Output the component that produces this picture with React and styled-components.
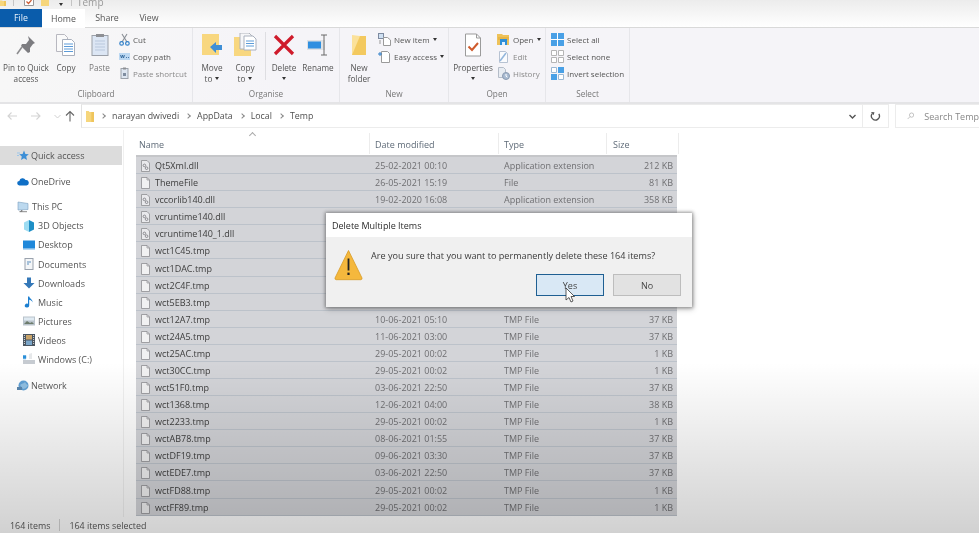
import React from 'react';
import styled, { createGlobalStyle } from 'styled-components';

const GlobalStyle = createGlobalStyle`
  html, body { margin: 0; padding: 0; background: #fff; overflow: hidden; }
  body { font-family: "Open Sans", "Noto Sans", "Liberation Sans", sans-serif; }
`;

const Window = styled.div`
  position: relative;
  width: 979px;
  height: 533px;
  overflow: hidden;
  display: flex;
  flex-direction: column;
  background: #fff;
  color: #444;
  filter: blur(0.35px);
`;

/* the capture gets darker towards the bottom */
const Vignette = styled.div`
  position: absolute;
  inset: 0;
  pointer-events: none;
  background: linear-gradient(rgba(0, 0, 0, 0) 68%, rgba(0, 0, 0, 0.18) 100%);
`;

const TopArea = styled.div`
  background: linear-gradient(#ececec, #ffffff);
  border-bottom: 1px solid #d9d9d9;
`;

const TitleBar = styled.div`
  height: 9px;
  overflow: hidden;
  display: flex;
  align-items: flex-start;
`;

const TitleIcons = styled.div`
  display: flex;
  align-items: flex-end;
  height: 6px;
`;

const TitleSep = styled.span`
  width: 1px;
  height: 6px;
  background: #c4c4c4;
  margin: ${p => p.$margin};
`;

const TitleText = styled.span`
  font-size: 10px;
  line-height: 12px;
  color: #999;
  margin-left: 5px;
  transform: translateY(-4px);
`;

const TabRow = styled.div`
  height: 18px;
  display: flex;
`;

const Tab = styled.div`
  width: ${p => p.$width}px;
  display: flex;
  align-items: center;
  justify-content: center;
  font-size: 8.8px;
  color: ${p => (p.$file ? '#e8f1fa' : '#555')};
  background: ${p => (p.$file ? '#0a5cab' : p.$active ? '#ffffff' : 'transparent')};
  margin-bottom: ${p => (p.$active ? '-1px' : '0')};
`;

const Ribbon = styled.div`
  height: 74px;
  flex: none;
  display: flex;
  background: linear-gradient(90deg, #f7f7f7, #f5f4f8 30%);
  border-bottom: 2px solid #e4e4e6;
`;

const Group = styled.div`
  width: ${p => p.$width}px;
  flex: none;
  display: flex;
  flex-direction: column;
  border-right: 1px solid #e6e6ea;
  box-sizing: border-box;
`;

const GroupBody = styled.div`
  flex: 1;
  display: flex;
  padding-left: ${p => p.$pad || 0}px;
`;

const GroupLabel = styled.div`
  height: 16px;
  text-align: center;
  font-size: 8.2px;
  line-height: 15px;
  color: #777;
`;

const LargeButton = styled.div`
  width: ${p => p.$width}px;
  flex: none;
  display: flex;
  flex-direction: column;
  align-items: center;
  padding-top: 5px;
  font-size: 8.2px;
  line-height: 11px;
  text-align: center;
  color: ${p => (p.$dim ? '#777' : '#555')};
  svg { display: block; margin-bottom: 5px; }
`;

const Caret = styled.i`
  display: ${p => (p.$block ? 'block' : 'inline-block')};
  width: 0;
  height: 0;
  border: 2.5px solid transparent;
  border-top: 3px solid #333;
  border-bottom: 0;
  margin: ${p => (p.$block ? '4px auto 0' : '0 0 2px 3px')};
`;

const VSep = styled.div`
  width: 1px;
  height: 48px;
  margin: 4px 0 0 6px;
  background: #dedee2;
  flex: none;
`;

const SmallColumn = styled.div`
  display: flex;
  flex-direction: column;
  padding-top: 3px;
`;

const SmallButton = styled.div`
  height: 17px;
  display: flex;
  align-items: center;
  gap: 3px;
  font-size: 8px;
  white-space: nowrap;
  color: ${p => (p.$dim ? '#8a8a8a' : '#555')};
  svg { flex: none; }
`;

const AddressRow = styled.div`
  height: 26px;
  flex: none;
  display: flex;
  align-items: flex-start;
  background: #fff;
`;

const NavBar = styled.div`
  width: 81px;
  height: 24px;
  box-sizing: border-box;
  flex: none;
  display: flex;
  align-items: center;
  padding-left: 6px;
  gap: 12px;
  svg { flex: none; }
`;

const UpSlot = styled.span`
  display: flex;
  margin-left: -8px;
`;

const AddressBox = styled.div`
  width: 782px;
  height: 24px;
  box-sizing: border-box;
  flex: none;
  display: flex;
  align-items: center;
  padding-left: 4px;
  border: 1px solid #ececec;
  border-left: 1px solid #e2e2e2;
  font-size: 8.8px;
  color: #4f4f4f;
`;

const Crumb = styled.span`
  margin-left: ${p => p.$gap}px;
  white-space: nowrap;
`;

const Chevron = styled.span`
  width: 3px;
  height: 3px;
  margin-left: 7px;
  border-top: 1px solid #888;
  border-right: 1px solid #888;
  transform: rotate(45deg);
  flex: none;
`;

const AddressEnd = styled.div`
  margin-left: auto;
  display: flex;
  align-items: center;
  padding-right: 6px;
`;

const RefreshBox = styled.div`
  width: 26px;
  height: 24px;
  box-sizing: border-box;
  flex: none;
  display: flex;
  align-items: center;
  justify-content: center;
  border: 1px solid #ececec;
  border-left: 0;
`;

const SearchBox = styled.div`
  margin-left: 6px;
  flex: 1;
  height: 24px;
  box-sizing: border-box;
  display: flex;
  align-items: center;
  gap: 10px;
  padding-left: 11px;
  border: 1px solid #ececec;
  border-right: 0;
  font-size: 9px;
  color: #888;
  white-space: nowrap;
  overflow: hidden;
`;

const Main = styled.div`
  flex: 1;
  min-height: 0;
  display: flex;
`;

const Sidebar = styled.nav`
  width: 124px;
  box-sizing: border-box;
  flex: none;
  padding-top: 16px;
  border-right: 1px solid #f0f0f0;
`;

const NavItem = styled.div`
  width: 122px;
  height: 19.1px;
  display: flex;
  align-items: center;
  gap: ${p => (p.$child ? 3 : 2)}px;
  padding-left: ${p => (p.$child ? 23 : 17)}px;
  box-sizing: border-box;
  margin-top: ${p => p.$gap || 0}px;
  font-size: 9px;
  color: #555;
  background: ${p => (p.$active ? '#dcdcdc' : 'transparent')};
  svg { flex: none; }
`;

const FileArea = styled.div`
  flex: 1;
  min-width: 0;
  padding-left: 12px;
`;

const HeaderRow = styled.div`
  height: 25px;
  width: 543px;
  display: grid;
  grid-template-columns: 234px 129px 108px 72px;
  position: relative;
`;

const HeaderCell = styled.div`
  display: flex;
  align-items: center;
  height: 21px;
  margin-top: 3px;
  padding: 2px 0 0 ${p => p.$pad}px;
  box-sizing: border-box;
  font-size: 9px;
  color: #5f6b78;
  border-right: 1px solid #ececec;
`;

const SortMark = styled.span`
  position: absolute;
  left: 114px;
  top: 3px;
  width: 4px;
  height: 4px;
  border-top: 1px solid #aaa;
  border-left: 1px solid #aaa;
  transform: rotate(45deg);
`;

const FileList = styled.div`
  width: 541px;
  border-top: 2px solid #c5c6c9;
`;

const FileRow = styled.div`
  height: 17.08px;
  box-sizing: border-box;
  padding-top: 2px;
  display: grid;
  grid-template-columns: 234px 129px 108px 70px;
  align-items: center;
  background: #d3d4d8;
  border-bottom: 1px solid #bcc2ca;
  font-size: 9px;
  line-height: 12px;
  white-space: nowrap;
`;

const NameCell = styled.div`
  display: flex;
  align-items: center;
  gap: 5px;
  padding-left: 5px;
  color: #3d3d3d;
`;

const MetaCell = styled.div`
  padding-left: 5px;
  color: #6f6f72;
  text-align: ${p => (p.$right ? 'right' : 'left')};
  padding-right: ${p => (p.$right ? '4px' : '0')};
`;

const StatusBar = styled.div`
  height: 16px;
  flex: none;
  display: flex;
  align-items: center;
  font-size: 8.9px;
  color: #555;
`;

const StatusText = styled.span`
  margin-left: ${p => p.$gap}px;
`;

const StatusSep = styled.span`
  width: 1px;
  height: 12px;
  margin-left: 9px;
  background: #d4d4d4;
`;

const Dialog = styled.div`
  position: absolute;
  left: 326px;
  top: 213px;
  width: 366px;
  height: 94px;
  background: #f0f0f0;
  box-shadow: 0 0 3px 1px rgba(60, 60, 60, 0.45), 1px 2px 6px rgba(0, 0, 0, 0.25);
  display: flex;
  flex-direction: column;
`;

const DialogTitle = styled.div`
  height: 24px;
  flex: none;
  background: #fff;
  display: flex;
  align-items: center;
  padding-left: 6px;
  font-size: 9px;
  color: #2c2c2c;
`;

const DialogBody = styled.div`
  flex: 1;
  display: flex;
  padding: 12px 0 0 8px;
  position: relative;
`;

const DialogMessage = styled.div`
  flex: 1;
  padding: 1px 0 0 8px;
  font-size: 9.1px;
  line-height: 12px;
  color: #3a3a3a;
  white-space: nowrap;
`;

const DialogButtons = styled.div`
  position: absolute;
  top: 37px;
  left: 210px;
  display: flex;
  gap: 9px;
`;

const DialogButton = styled.div`
  width: 68px;
  height: 22px;
  box-sizing: border-box;
  display: flex;
  align-items: center;
  justify-content: center;
  font-size: 9px;
  color: #444;
  background: ${p => (p.$primary ? '#d9e8f5' : '#e2e2e2')};
  border: ${p => (p.$primary ? '1.5px solid #1f5f92' : '1px solid #bdbdbd')};
`;

const Cursor = styled.svg`
  position: absolute;
  left: 239px;
  top: 50px;
`;

const FolderSmall = ({ w = 8, h = 12 }) => (
  <svg width={w} height={h} viewBox="0 0 9 12" preserveAspectRatio="none">
    <path d="M0 1h3l1 1h5v10H0z" fill="#f6d67c" />
    <path d="M6 2h3v10H6z" fill="#efc55c" />
  </svg>
);

const PinIcon = () => (
  <svg width="24" height="24" viewBox="0 0 24 24">
    <path d="M14 3l7 7-2 1-3 4 0 4-2 1-7-7 1-2 4 0 3-4z" fill="#7c7c80" />
    <path d="M8 14L3 21" stroke="#8d8d8f" strokeWidth="1.6" />
  </svg>
);

const CopyIcon = () => (
  <svg width="24" height="24" viewBox="0 0 24 24">
    <path d="M2.5 1.5h8l3 3v14h-11z" fill="#fafafa" stroke="#b8b8c0" />
    <path d="M8.5 6.5h9l3 3v13h-12z" fill="#fff" stroke="#a9b0bd" />
    <path d="M10 11h9M10 13.5h9M10 16h9M10 18.5h9" stroke="#5c9bd8" />
  </svg>
);

const PasteIcon = () => (
  <svg width="24" height="24" viewBox="0 0 24 24">
    <rect x="4" y="2.5" width="16" height="20" fill="#dce6f4" stroke="#9a9fa8" />
    <rect x="8" y="1" width="8" height="3" fill="#8d8f94" />
    <path d="M7 8h10M7 11h10M7 14h10M7 17h10" stroke="#b9c8dd" />
  </svg>
);

const MoveIcon = () => (
  <svg width="24" height="24" viewBox="0 0 24 24">
    <path d="M2 1h17v21H2z" fill="#f8d77f" />
    <path d="M10 14l6-5v3h6v5h-6v3z" fill="#3f8fd6" />
  </svg>
);

const CopyToIcon = () => (
  <svg width="24" height="24" viewBox="0 0 24 24">
    <path d="M1 4h17v19H1z" fill="#f8d77f" />
    <path d="M7 0h9l3 3v13H7z" fill="#f6f6f8" stroke="#b0b4bc" />
    <path d="M11 3h9l3 3v11H11z" fill="#fff" stroke="#a9b0bd" />
    <path d="M13 8h8M13 10.5h8M13 13h8" stroke="#5c9bd8" />
  </svg>
);

const DeleteIcon = () => (
  <svg width="24" height="24" viewBox="0 0 24 24">
    <path d="M3 3l18 18M21 3L3 21" stroke="#cf1b2b" strokeWidth="3.2" />
  </svg>
);

const RenameIcon = () => (
  <svg width="24" height="24" viewBox="0 0 24 24">
    <rect x="1" y="7" width="18" height="10" fill="#dfe1e4" />
    <rect x="2" y="8.5" width="13" height="7" fill="#2f8fe0" />
    <path d="M18 2v20M15 2h6M15 22h6" stroke="#6b6b6b" />
  </svg>
);

const NewFolderIcon = () => (
  <svg width="20" height="24" viewBox="0 0 20 24">
    <path d="M3 2l8 1 0 0v19H3z" fill="#fbe19a" />
    <path d="M11 3h6v19H3z" fill="#f3c95f" />
  </svg>
);

const PropertiesIcon = () => (
  <svg width="24" height="24" viewBox="0 0 24 24">
    <path d="M4.5 1h11l4 4v18h-15z" fill="#fff" stroke="#9b9b9b" />
    <path d="M15.5 1v4h4" fill="none" stroke="#9b9b9b" />
    <path d="M7.5 13.5l3.5 3.5 6-7" fill="none" stroke="#cf5a2c" strokeWidth="2" />
  </svg>
);

const CutIcon = () => (
  <svg width="11" height="13" viewBox="0 0 11 13">
    <path d="M3 1l5 8M8 1L3 9" stroke="#8a8f96" strokeWidth="1.1" />
    <circle cx="2.6" cy="10.4" r="1.8" fill="none" stroke="#2f7fc8" strokeWidth="1.2" />
    <circle cx="8.4" cy="10.4" r="1.8" fill="none" stroke="#2f7fc8" strokeWidth="1.2" />
  </svg>
);

const CopyPathIcon = () => (
  <svg width="11" height="13" viewBox="0 0 11 13">
    <rect x="0" y="3" width="11" height="7" fill="#bcd8f2" />
    <path d="M1.5 5l1 3 1-3 1 3 1-3M7 7.5h1M9 7.5h1" stroke="#2a5f96" strokeWidth="0.8" fill="none" />
  </svg>
);

const PasteShortcutIcon = () => (
  <svg width="11" height="13" viewBox="0 0 11 13">
    <rect x="2" y="1.5" width="7" height="10" fill="#dde5f0" stroke="#9ba1aa" />
    <rect x="4" y="0.5" width="3" height="2" fill="#8d8f94" />
    <rect x="4" y="6" width="3" height="3" fill="#7f8da0" />
  </svg>
);

const NewItemIcon = () => (
  <svg width="13" height="13" viewBox="0 0 13 13">
    <rect x="0.5" y="0.5" width="5" height="5" fill="#cfe0f2" stroke="#7d8aa0" />
    <path d="M5.5 4.5h4l3 2.5v5.5h-7z" fill="#fff" stroke="#9a9a9a" />
    <path d="M2 7v4" stroke="#999" />
  </svg>
);

const EasyAccessIcon = () => (
  <svg width="13" height="13" viewBox="0 0 13 13">
    <path d="M3.5 1.5h6l2 2v9h-8z" fill="#fff" stroke="#9a9a9a" />
    <path d="M0 4h4M2 2v4" stroke="#2f7fc8" />
  </svg>
);

const OpenIcon = () => (
  <svg width="13" height="13" viewBox="0 0 13 13">
    <path d="M0 1h5l1 1h6v10H0z" fill="#eec25a" />
    <rect x="1" y="4" width="11" height="3" fill="#e6b548" />
    <rect x="3" y="6" width="7" height="6" fill="#2f8fd8" />
    <rect x="5" y="9" width="3" height="3" fill="#dff0ff" />
  </svg>
);

const EditIcon = () => (
  <svg width="13" height="13" viewBox="0 0 13 13">
    <path d="M2.5 1.5h6l2 2v9h-8z" fill="#fafbfd" stroke="#b7c2d2" />
    <path d="M3 11l6-8" stroke="#92b6dc" strokeWidth="1.6" />
  </svg>
);

const HistoryIcon = () => (
  <svg width="13" height="13" viewBox="0 0 13 13">
    <path d="M1.5 0.5h5l2 2v8h-7z" fill="#e8ecf2" stroke="#b4bcc8" />
    <circle cx="9" cy="9" r="3.5" fill="#a9bbd2" stroke="#8b9bb1" />
    <path d="M9 7v2.2l1.4 1" stroke="#fff" fill="none" />
  </svg>
);

const SelectAllIcon = () => (
  <svg width="13" height="13" viewBox="0 0 13 13">
    <rect width="13" height="13" fill="#49a0e6" />
    <path d="M6.5 0v13M0 6.5h13" stroke="#fff" />
  </svg>
);

const SelectNoneIcon = () => (
  <svg width="13" height="13" viewBox="0 0 13 13">
    <path d="M0.5 0.5h5v5h-5zM7.5 0.5h5v5h-5zM0.5 7.5h5v5h-5zM7.5 7.5h5v5h-5z" fill="#fff" stroke="#b5b5b5" />
  </svg>
);

const InvertIcon = () => (
  <svg width="13" height="13" viewBox="0 0 13 13">
    <path d="M0.5 0.5h5v5h-5zM7.5 7.5h5v5h-5z" fill="#fff" stroke="#9bb8d4" />
    <rect x="7" y="0" width="6" height="6" fill="#49a0e6" />
    <rect x="0" y="7" width="6" height="6" fill="#49a0e6" />
  </svg>
);

const ArrowLeft = ({ flip }) => (
  <svg width="12" height="10" viewBox="0 0 12 10" style={flip ? { transform: 'scaleX(-1)' } : undefined}>
    <path d="M11 5H2M5.5 1.5L2 5l3.5 3.5" fill="none" stroke="#d4d4d4" strokeWidth="1.1" />
  </svg>
);

const SmallChevron = ({ color = '#d0d0d0', width = 1 }) => (
  <svg width="7" height="5" viewBox="0 0 7 5">
    <path d="M0.5 1L3.5 4l3-3" fill="none" stroke={color} strokeWidth={width} />
  </svg>
);

const UpArrow = () => (
  <svg width="10" height="12" viewBox="0 0 10 12">
    <path d="M5 11.5V1.5M1 5.5l4-4 4 4" fill="none" stroke="#666" strokeWidth="1.1" />
  </svg>
);

const RefreshIcon = () => (
  <svg width="11" height="11" viewBox="0 0 11 11">
    <path d="M2.2 2.6a4 4 0 1 0 6.6 0.3" fill="none" stroke="#555" strokeWidth="1.3" />
    <path d="M1 1l3.5 0.3-1 3z" fill="#555" />
  </svg>
);

const SearchIcon = () => (
  <svg width="12" height="12" viewBox="0 0 12 12">
    <circle cx="7.5" cy="4.5" r="3.5" fill="none" stroke="#a0a0a0" />
    <path d="M5 7l-4 4" stroke="#a0a0a0" />
  </svg>
);

const StarIcon = () => (
  <svg width="12" height="12" viewBox="0 0 12 12">
    <path d="M7 0.5l1.4 3.4 3.4 0.3-2.6 2.3 0.8 3.6-3-1.9-3 1.9 0.8-3.6-2.6-2.3 3.4-0.3z" fill="#3d8fd6" />
    <path d="M0 3h3M0 5.5h2" stroke="#9cc6ea" />
  </svg>
);

const CloudIcon = () => (
  <svg width="12" height="12" viewBox="0 0 14 12">
    <path d="M3 10a2.6 2.6 0 0 1-.3-5.2A4 4 0 0 1 10 3.6a3.2 3.2 0 0 1 1 6.4z" fill="#0f6fc6" />
  </svg>
);

const PcIcon = () => (
  <svg width="13" height="12" viewBox="0 0 13 12">
    <path d="M1 1l10 1.5v6L1 9z" fill="#bcd9ef" stroke="#7aa0bf" strokeWidth="0.6" />
    <path d="M5 9.2v1.5H2.5M5 10.7h5" stroke="#8c8c8c" />
  </svg>
);

const CubeIcon = () => (
  <svg width="12" height="12" viewBox="0 0 12 12">
    <path d="M6 0l5 2.5v7L6 12z" fill="#1e8fc6" />
    <path d="M6 0L1 2.5v7L6 12z" fill="#9ddcf2" />
  </svg>
);

const DesktopIcon = () => (
  <svg width="12" height="12" viewBox="0 0 12 12">
    <rect y="1.5" width="12" height="8" fill="#1f88da" />
    <rect y="9.5" width="12" height="1" fill="#6db2e8" />
  </svg>
);

const DocumentsIcon = () => (
  <svg width="12" height="12" viewBox="0 0 12 12">
    <rect x="2" y="0.5" width="8" height="11" fill="#f4f6f8" stroke="#9aa2ad" />
    <path d="M4 4h4M4 6h2" stroke="#5d8fbe" />
  </svg>
);

const DownloadsIcon = () => (
  <svg width="12" height="12" viewBox="0 0 12 12">
    <path d="M4 0.5h4V6h3.5L6 11.5.5 6H4z" fill="#3478b8" />
  </svg>
);

const MusicIcon = () => (
  <svg width="12" height="12" viewBox="0 0 12 12">
    <path d="M5 0.5h1.2c.3 2 3.8 3 3.3 6-.5-1.7-2-2.5-3.3-2.7V9.5A2.2 2 0 1 1 5 7.8z" fill="#1d7fd0" />
  </svg>
);

const PicturesIcon = () => (
  <svg width="12" height="12" viewBox="0 0 12 12">
    <rect y="1.5" width="12" height="9" fill="#b9c3cb" />
    <rect x="1" y="2.5" width="10" height="3" fill="#dfeaf2" />
    <path d="M1 9l3-3 3 2 2-1 2 2z" fill="#6d7c6c" />
  </svg>
);

const VideosIcon = () => (
  <svg width="12" height="12" viewBox="0 0 12 12">
    <rect width="12" height="12" fill="#4a5560" />
    <rect x="3" y="1" width="6" height="4.5" fill="#c9a46a" />
    <rect x="3" y="6.5" width="6" height="4.5" fill="#7ba6c9" />
    <path d="M1.4 1v10M10.6 1v10" stroke="#dcdcdc" strokeDasharray="1 1" />
  </svg>
);

const DriveIcon = () => (
  <svg width="12" height="12" viewBox="0 0 12 12">
    <rect y="7" width="12" height="4" fill="#c6cbd1" />
    <path d="M0 2.5h3v3H0zM0 6h3" fill="#2b8fd8" stroke="#2b8fd8" strokeWidth="0.4" />
    <path d="M6 1l3-1v6H6z" fill="#e6e8ea" />
  </svg>
);

const NetworkIcon = () => (
  <svg width="12" height="12" viewBox="0 0 12 12">
    <circle cx="6.5" cy="5.5" r="5" fill="#5f9fd3" />
    <path d="M3 5c2-2 4-1 5-3 1 2 2 3 3 3-1 3-4 4-5 4z" fill="#8fbfe2" />
    <rect x="0" y="7" width="5" height="3" fill="#5a86ad" />
  </svg>
);

const BlankFile = () => (
  <svg width="9" height="12" viewBox="0 0 9 12">
    <path d="M0.5 0.5h5.5l2.5 2.5v8.5h-8z" fill="#f1f1f2" stroke="#8e8e92" strokeWidth="0.8" />
    <path d="M6 0.5V3h2.5" fill="none" stroke="#8e8e92" strokeWidth="0.7" />
  </svg>
);

const DllFile = () => (
  <svg width="9" height="12" viewBox="0 0 9 12">
    <path d="M0.5 0.5h5.5l2.5 2.5v8.5h-8z" fill="#e9e9ec" stroke="#8e8e92" strokeWidth="0.8" />
    <circle cx="3.4" cy="5.4" r="1.3" fill="none" stroke="#77777c" strokeWidth="0.8" />
    <circle cx="5.6" cy="8.2" r="1.3" fill="none" stroke="#77777c" strokeWidth="0.8" />
  </svg>
);

const WarningIcon = () => (
  <svg width="29" height="32" viewBox="0 0 29 32">
    <path d="M14.5 1.5L28 29a1.4 1.4 0 0 1-1.2 1.7H2.2A1.4 1.4 0 0 1 1 29z" fill="#f5b83d" stroke="#d89a25" strokeWidth="0.8" />
    <rect x="13.6" y="9.5" width="1.8" height="12" fill="#222" />
    <rect x="13.4" y="23.6" width="2.2" height="2.4" fill="#222" />
  </svg>
);

const clipboardSmall = [
  { label: 'Cut', Icon: CutIcon },
  { label: 'Copy path', Icon: CopyPathIcon },
  { label: 'Paste shortcut', Icon: PasteShortcutIcon, dim: true },
];

const newSmall = [
  { label: 'New item', Icon: NewItemIcon, caret: true },
  { label: 'Easy access', Icon: EasyAccessIcon, caret: true },
];

const openSmall = [
  { label: 'Open', Icon: OpenIcon, caret: true },
  { label: 'Edit', Icon: EditIcon, dim: true },
  { label: 'History', Icon: HistoryIcon, dim: true },
];

const selectSmall = [
  { label: 'Select all', Icon: SelectAllIcon },
  { label: 'Select none', Icon: SelectNoneIcon },
  { label: 'Invert selection', Icon: InvertIcon },
];

const navItems = [
  { label: 'Quick access', Icon: StarIcon, active: true },
  { label: 'OneDrive', Icon: CloudIcon, gap: 7 },
  { label: 'This PC', Icon: PcIcon, gap: 6 },
  { label: '3D Objects', Icon: CubeIcon, child: true },
  { label: 'Desktop', Icon: DesktopIcon, child: true },
  { label: 'Documents', Icon: DocumentsIcon, child: true },
  { label: 'Downloads', Icon: DownloadsIcon, child: true },
  { label: 'Music', Icon: MusicIcon, child: true },
  { label: 'Pictures', Icon: PicturesIcon, child: true },
  { label: 'Videos', Icon: VideosIcon, child: true },
  { label: 'Windows (C:)', Icon: DriveIcon, child: true },
  { label: 'Network', Icon: NetworkIcon, gap: 7 },
];

const ext = 'Application extension';
// rows behind the dialog only show their name
const files = [
  ['Qt5Xml.dll', '25-02-2021 00:10', ext, '212 KB', true],
  ['ThemeFile', '26-05-2021 15:19', 'File', '81 KB'],
  ['vccorlib140.dll', '19-02-2020 16:08', ext, '358 KB', true],
  ['vcruntime140.dll', '', '', '', true],
  ['vcruntime140_1.dll', '', '', '', true],
  ['wct1C45.tmp', '', '', ''],
  ['wct1DAC.tmp', '', '', ''],
  ['wct2C4F.tmp', '', '', ''],
  ['wct5EB3.tmp', '', '', ''],
  ['wct12A7.tmp', '10-06-2021 05:10', 'TMP File', '37 KB'],
  ['wct24A5.tmp', '11-06-2021 03:00', 'TMP File', '37 KB'],
  ['wct25AC.tmp', '29-05-2021 00:02', 'TMP File', '1 KB'],
  ['wct30CC.tmp', '29-05-2021 00:02', 'TMP File', '1 KB'],
  ['wct51F0.tmp', '03-06-2021 22:50', 'TMP File', '37 KB'],
  ['wct1368.tmp', '12-06-2021 04:00', 'TMP File', '38 KB'],
  ['wct2233.tmp', '29-05-2021 00:02', 'TMP File', '1 KB'],
  ['wctAB78.tmp', '08-06-2021 01:55', 'TMP File', '37 KB'],
  ['wctDF19.tmp', '09-06-2021 03:30', 'TMP File', '37 KB'],
  ['wctEDE7.tmp', '03-06-2021 22:50', 'TMP File', '37 KB'],
  ['wctFD88.tmp', '29-05-2021 00:02', 'TMP File', '1 KB'],
  ['wctFF89.tmp', '29-05-2021 00:02', 'TMP File', '1 KB'],
];

const SmallList = ({ items }) => (
  <SmallColumn>
    {items.map(({ label, Icon, dim, caret }) => (
      <SmallButton key={label} $dim={dim}>
        <Icon />
        <span>{label}{caret && <Caret />}</span>
      </SmallButton>
    ))}
  </SmallColumn>
);

const App = () => (
  <Window>
    <GlobalStyle />
    <TopArea>
      <TitleBar>
        <TitleIcons>
          <FolderSmall w={6} h={6} />
          <TitleSep $margin="0 0 0 7px" />
          <svg width="10" height="6" viewBox="0 0 10 6" style={{ marginLeft: 10 }}>
            <path d="M0.5 0v5.5h9V0" fill="#fff" stroke="#999" />
            <path d="M2.5 1.5l2 2 3-3.5" fill="none" stroke="#cc5a33" strokeWidth="1.2" />
          </svg>
          <svg width="8" height="6" viewBox="0 0 8 6" style={{ marginLeft: 7 }}>
            <rect width="8" height="6" fill="#f6d67c" />
          </svg>
          <Caret style={{ margin: '0 0 0 10px' }} />
          <TitleSep $margin="0 0 0 8px" />
        </TitleIcons>
        <TitleText>Temp</TitleText>
      </TitleBar>
      <TabRow>
        <Tab $width={42} $file>File</Tab>
        <Tab $width={43} $active>Home</Tab>
        <Tab $width={44}>Share</Tab>
        <Tab $width={40}>View</Tab>
      </TabRow>
    </TopArea>

    <Ribbon>
      <Group $width={193}>
        <GroupBody>
          <LargeButton $width={52}><PinIcon /><span>Pin to Quick<br />access</span></LargeButton>
          <LargeButton $width={28}><CopyIcon /><span>Copy</span></LargeButton>
          <LargeButton $width={39} $dim><PasteIcon /><span>Paste</span></LargeButton>
          <SmallList items={clipboardSmall} />
        </GroupBody>
        <GroupLabel>Clipboard</GroupLabel>
      </Group>
      <Group $width={147}>
        <GroupBody>
          <LargeButton $width={38}><MoveIcon /><span>Move<br />to<Caret /></span></LargeButton>
          <LargeButton $width={28}><CopyToIcon /><span>Copy<br />to<Caret /></span></LargeButton>
          <VSep />
          <LargeButton $width={36}><DeleteIcon /><span>Delete<Caret $block /></span></LargeButton>
          <LargeButton $width={32}><RenameIcon /><span>Rename</span></LargeButton>
        </GroupBody>
        <GroupLabel>Organise</GroupLabel>
      </Group>
      <Group $width={109}>
        <GroupBody>
          <LargeButton $width={38}><NewFolderIcon /><span>New<br />folder</span></LargeButton>
          <SmallList items={newSmall} />
        </GroupBody>
        <GroupLabel>New</GroupLabel>
      </Group>
      <Group $width={97}>
        <GroupBody>
          <LargeButton $width={48}><PropertiesIcon /><span>Properties<Caret $block /></span></LargeButton>
          <SmallList items={openSmall} />
        </GroupBody>
        <GroupLabel>Open</GroupLabel>
      </Group>
      <Group $width={84}>
        <GroupBody $pad={5}>
          <SmallList items={selectSmall} />
        </GroupBody>
        <GroupLabel>Select</GroupLabel>
      </Group>
    </Ribbon>

    <AddressRow>
      <NavBar>
        <ArrowLeft />
        <ArrowLeft flip />
        <SmallChevron />
        <UpSlot><UpArrow /></UpSlot>
      </NavBar>
      <AddressBox>
        <FolderSmall />
        <Chevron />
        <Crumb $gap={7}>narayan dwivedi</Crumb>
        <Chevron />
        <Crumb $gap={7}>AppData</Crumb>
        <Chevron />
        <Crumb $gap={7}>Local</Crumb>
        <Chevron />
        <Crumb $gap={7}>Temp</Crumb>
        <AddressEnd><SmallChevron color="#555" width={1.4} /></AddressEnd>
      </AddressBox>
      <RefreshBox><RefreshIcon /></RefreshBox>
      <SearchBox><SearchIcon /><span>Search Temp</span></SearchBox>
    </AddressRow>

    <Main>
      <Sidebar>
        {navItems.map(({ label, Icon, active, gap, child }) => (
          <NavItem key={label} $active={active} $gap={gap} $child={child}>
            <Icon />
            <span>{label}</span>
          </NavItem>
        ))}
      </Sidebar>
      <FileArea>
        <HeaderRow>
          <SortMark />
          <HeaderCell $pad={3}>Name</HeaderCell>
          <HeaderCell $pad={5}>Date modified</HeaderCell>
          <HeaderCell $pad={5}>Type</HeaderCell>
          <HeaderCell $pad={6}>Size</HeaderCell>
        </HeaderRow>
        <FileList>
          {files.map(([name, date, type, size, dll]) => (
            <FileRow key={name}>
              <NameCell>{dll ? <DllFile /> : <BlankFile />}<span>{name}</span></NameCell>
              <MetaCell>{date}</MetaCell>
              <MetaCell>{type}</MetaCell>
              <MetaCell $right>{size}</MetaCell>
            </FileRow>
          ))}
        </FileList>
      </FileArea>
    </Main>

    <StatusBar>
      <StatusText $gap={10}>164 items</StatusText>
      <StatusSep />
      <StatusText $gap={9}>164 items selected</StatusText>
    </StatusBar>

    <Vignette />

    <Dialog>
      <DialogTitle>Delete Multiple Items</DialogTitle>
      <DialogBody>
        <WarningIcon />
        <DialogMessage>Are you sure that you want to permanently delete these 164 items?</DialogMessage>
        <DialogButtons>
          <DialogButton $primary>Yes</DialogButton>
          <DialogButton>No</DialogButton>
        </DialogButtons>
        <Cursor width="10" height="16" viewBox="0 0 10 16">
          <path d="M1 1v12l3-2.5 2 4.5 2-1-2-4.5h3.5z" fill="#fff" stroke="#333" strokeWidth="0.8" />
        </Cursor>
      </DialogBody>
    </Dialog>
  </Window>
);

export default App;
